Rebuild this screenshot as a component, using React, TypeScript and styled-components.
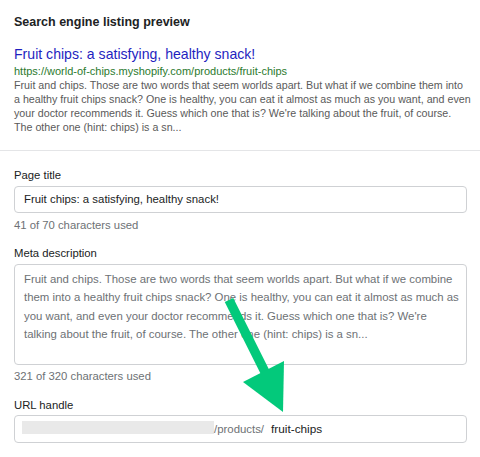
import styled, { createGlobalStyle } from 'styled-components'

const GlobalStyle = createGlobalStyle`
  html, body {
    margin: 0;
    padding: 0;
    background: #ffffff;
  }
  body {
    font-family: "Liberation Sans", Arial, sans-serif;
    color: #202223;
  }
`

const Page = styled.div`
  position: relative;
  width: 480px;
  height: 457px;
  overflow: hidden;
  background: #ffffff;
`

const PreviewSection = styled.section`
  padding: 14px 13px 16px 14px;
  border-bottom: 1px solid #e4e5e7;
`

const Heading = styled.h2`
  margin: 0;
  font-size: 12.5px;
  line-height: 16px;
  font-weight: 700;
  color: #202223;
`

const PreviewTitle = styled.div`
  margin-top: 15px;
  font-size: 14.1px;
  line-height: 19px;
  color: #1f1fbf;
`

const PreviewUrl = styled.div`
  font-size: 11px;
  line-height: 14px;
  color: #2b7a2e;
`

const PreviewDescription = styled.div`
  font-size: 10.7px;
  line-height: 14px;
  color: #5a5a5a;
  white-space: pre;
`

const FormSection = styled.section`
  padding: 16px 13px 0 14px;
`

const Field = styled.div`
  & + & {
    margin-top: 12.5px;
  }
`

const Label = styled.label`
  display: block;
  font-size: 11.3px;
  line-height: 16px;
  margin-bottom: 2.5px;
  color: #202223;
`

const TextInput = styled.div`
  box-sizing: border-box;
  display: flex;
  align-items: center;
  height: 27.5px;
  padding: 0 9px;
  border: 1px solid #cfd1d4;
  border-radius: 4px;
  font-size: 11.4px;
  line-height: 16px;
  color: #202223;
`

const TextArea = styled.div`
  box-sizing: border-box;
  height: 101px;
  padding: 5px 9px 0 9px;
  border: 1px solid #cfd1d4;
  border-radius: 4px;
  font-size: 11.4px;
  line-height: 18.5px;
  color: #6d7175;
  white-space: pre;
  overflow: hidden;
`

const HelpText = styled.div`
  margin-top: 3.5px;
  font-size: 11.3px;
  line-height: 16px;
  color: #6d7175;
`

const UrlInput = styled(TextInput)`
  padding-left: 7px;
`

const Redacted = styled.span`
  display: inline-block;
  width: 192px;
  height: 13px;
  margin-top: -3px;
  background: #e9e9e9;
`

const Prefix = styled.span`
  color: #6d7175;
  margin-right: 7px;
`

const Handle = styled.span`
  font-size: 11.8px;
  color: #202223;
`

const ArrowOverlay = styled.svg`
  position: absolute;
  left: 0;
  top: 0;
  pointer-events: none;
`

const description =
  "Fruit and chips. Those are two words that seem worlds apart. But what if we combine them into\na healthy fruit chips snack? One is healthy, you can eat it almost as much as you want, and even\nyour doctor recommends it. Guess which one that is? We're talking about the fruit, of course.\nThe other one (hint: chips) is a sn..."

const metaText =
  "Fruit and chips. Those are two words that seem worlds apart. But what if we combine\nthem into a healthy fruit chips snack? One is healthy, you can eat it almost as much as\nyou want, and even your doctor recommends it. Guess which one that is? We're\ntalking about the fruit, of course. The other one (hint: chips) is a sn..."

export default function App() {
  return (
    <>
      <GlobalStyle />
      <Page>
        <PreviewSection>
          <Heading>Search engine listing preview</Heading>
          <PreviewTitle>Fruit chips: a satisfying, healthy snack!</PreviewTitle>
          <PreviewUrl>https://world-of-chips.myshopify.com/products/fruit-chips</PreviewUrl>
          <PreviewDescription>{description}</PreviewDescription>
        </PreviewSection>

        <FormSection>
          <Field>
            <Label>Page title</Label>
            <TextInput>Fruit chips: a satisfying, healthy snack!</TextInput>
            <HelpText>41 of 70 characters used</HelpText>
          </Field>
          <Field>
            <Label>Meta description</Label>
            <TextArea>{metaText}</TextArea>
            <HelpText>321 of 320 characters used</HelpText>
          </Field>
          <Field>
            <Label>URL handle</Label>
            <UrlInput>
              <Redacted />
              <Prefix>/products/</Prefix>
              <Handle>fruit-chips</Handle>
            </UrlInput>
          </Field>
        </FormSection>

        <ArrowOverlay width="480" height="457" viewBox="0 0 480 457">
          <line x1="229" y1="300" x2="267" y2="376" stroke="#03c97b" strokeWidth="9.5" />
          <polygon points="243,382 284,361 283,412" fill="#03c97b" />
        </ArrowOverlay>
      </Page>
    </>
  )
}
